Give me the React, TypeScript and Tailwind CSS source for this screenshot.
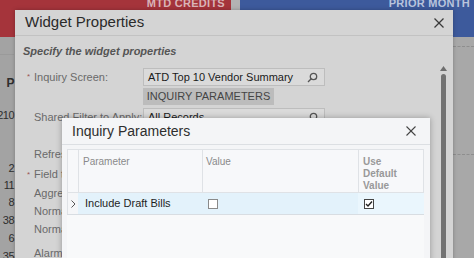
import React from "react";

const Search = () => (
  <svg width="11" height="11" viewBox="0 0 11 11" fill="none" stroke="#555" strokeWidth="1.3">
    <circle cx="6.5" cy="4.5" r="3.2" />
    <line x1="4.2" y1="6.8" x2="1" y2="10" />
  </svg>
);

const Label = ({ text, star, h, mt = 0 }: { text: string; star?: boolean; h: number; mt?: number }) => (
  <div className="flex items-center pl-[12px]" style={{ height: h, marginTop: mt }}>
    <span className="w-[7px] text-[8px] text-[#9a5555]">{star ? "*" : ""}</span>
    <span className="text-[11px] text-[#6a6a6a] whitespace-nowrap">{text}</span>
  </div>
);

export default function App() {
  return (
    <div
      className="relative w-[474px] h-[258px] overflow-hidden bg-[#a8a8a8]"
      style={{ fontFamily: '"Liberation Sans", Arial, sans-serif' }}
    >
      {/* background page */}
      <div className="flex h-[37px]">
        <div className="w-[231px] bg-[#a5343b] flex justify-end pr-[6px]">
          <span className="text-[11px] font-bold text-[#d9b5b8] leading-none mt-[-2px] tracking-wide">MTD CREDITS</span>
        </div>
        <div className="w-[9px] bg-[#b3b3b3]" />
        <div className="flex-1 bg-[#3d5a9c] flex justify-end pr-[4px]">
          <span className="text-[11px] font-bold text-[#b9c4dc] leading-none mt-[-2px] tracking-wide">PRIOR MONTH</span>
        </div>
      </div>
      <div className="flex">
        <div className="w-[15px] flex flex-col items-end pr-[1px] text-[11px] tracking-tighter text-[#2e2e2e] bg-[#a3a3a3] h-[221px]">
          <div className="h-[18px] w-full border-b border-[#9a9a9a] shrink-0" />
          <div className="h-[21px] shrink-0" />
          <div className="h-[14px] flex items-center font-bold shrink-0 text-[12px]">P</div>
          <div className="h-[18px] shrink-0" />
          <div className="h-[14px] flex items-center shrink-0">210</div>
          <div className="h-[38px] shrink-0" />
          <div className="h-[17px] flex items-center shrink-0">2</div>
          <div className="h-[17px] flex items-center shrink-0">11</div>
          <div className="h-[17px] flex items-center shrink-0">8</div>
          <div className="h-[18px] flex items-center shrink-0">38</div>
          <div className="h-[18px] flex items-center shrink-0">6</div>
          <div className="h-[18px] flex items-center shrink-0">35</div>
        </div>
        <div className="flex-1" />
        <div className="w-[21px] flex flex-col">
          <div className="h-[10px] border-b border-dashed border-[#8e8e8e]" />
          <div className="h-[108px] border-b border-dashed border-[#8e8e8e]" />
        </div>
      </div>

      {/* Widget Properties dialog */}
      <div className="absolute left-[15px] top-[10px] w-[438px] h-[260px] bg-[#d4d4d4] shadow-[0_0_4px_rgba(0,0,0,0.25)] flex flex-col">
        <div className="h-[26px] shrink-0 flex items-center justify-between pl-[10px] pr-[9px] border-b border-[#c2c2c2]">
          <span className="text-[15px] text-[#2a2a2a]">Widget Properties</span>
          <svg width="10" height="10" viewBox="0 0 10 10" stroke="#3a3a3a" strokeWidth="1.2">
            <line x1="0.5" y1="0.5" x2="9.5" y2="9.5" />
            <line x1="9.5" y1="0.5" x2="0.5" y2="9.5" />
          </svg>
        </div>
        <div className="flex">
          <div className="flex-1 flex flex-col">
            <div className="h-[28px] flex items-center pl-[8px] pt-[2px]">
              <span className="text-[11px] italic font-bold text-[#555]">Specify the widget properties</span>
            </div>
            <div className="flex mt-[4px]">
              <div className="w-[128px] flex flex-col">
                <Label text="Inquiry Screen:" star h={18} />
                <div className="h-[22px]" />
                <Label text="Shared Filter to Apply:" h={18} />
                <Label text="" h={19} />
                <Label text="Refresh Interval:" h={18} />
                <Label text="Field to Display:" star h={19} mt={2} />
                <Label text="Aggregate Function:" h={18} />
                <Label text="Normalize Value:" h={18} />
                <Label text="Normalize Format:" h={18} />
                <Label text="Alarm Limit:" h={18} mt={6} />
              </div>
              <div className="flex flex-col">
                <div className="w-[182px] h-[18px] bg-[#dadada] border border-[#bdbdbd] flex items-center justify-between pl-[4px] pr-[6px]">
                  <span className="text-[11px] text-[#1a1a1a]">ATD Top 10 Vendor Summary</span>
                  <Search />
                </div>
                <div className="w-[131px] h-[17px] mt-[2px] bg-[#bcbcbc] flex items-center justify-center">
                  <span className="text-[11px] text-[#444]">INQUIRY PARAMETERS</span>
                </div>
                <div className="w-[182px] h-[18px] mt-[3px] bg-[#dadada] border border-[#bdbdbd] flex items-center justify-between pl-[4px] pr-[6px]">
                  <span className="text-[11px] text-[#1a1a1a]">All Records</span>
                  <Search />
                </div>
              </div>
            </div>
          </div>
          <div className="w-[13px] flex flex-col items-center pt-[30px] pr-[6px]">
            <svg width="7" height="5" viewBox="0 0 7 5">
              <polygon points="3.5,0 7,5 0,5" fill="#6e6e6e" />
            </svg>
            <div className="w-[5px] h-[200px] mt-[3px] rounded-full bg-[#727272]" />
          </div>
        </div>
      </div>

      {/* Inquiry Parameters dialog */}
      <div className="absolute left-[62px] top-[118px] w-[368px] h-[150px] bg-[#f4f5f7] shadow-[0_0_6px_rgba(0,0,0,0.3)] flex flex-col">
        <div className="h-[27px] shrink-0 flex items-center justify-between pl-[10px] pr-[14px] border-b border-[#dcdfe3]">
          <span className="text-[14px] text-[#2e2e2e]">Inquiry Parameters</span>
          <svg width="10" height="10" viewBox="0 0 10 10" stroke="#444" strokeWidth="1.1">
            <line x1="0.5" y1="0.5" x2="9.5" y2="9.5" />
            <line x1="9.5" y1="0.5" x2="0.5" y2="9.5" />
          </svg>
        </div>
        <div className="mx-[5px] mt-[4px] w-[357px] bg-[#f8f9fa] flex flex-col flex-1">
          <div className="flex h-[44px] border border-[#dfe2e6] bg-[#f7f8fa] text-[10px] text-[#8a8a8a] leading-[12px]">
            <div className="w-[11px] border-r border-[#dfe2e6]" />
            <div className="w-[124px] border-r border-[#dfe2e6] pl-[4px] pt-[6px]">Parameter</div>
            <div className="w-[156px] border-r border-[#dfe2e6] pl-[3px] pt-[6px]">Value</div>
            <div className="flex-1 pl-[4px] pt-[6px] font-bold text-[#999]">
              Use<br />Default<br />Value
            </div>
          </div>
          <div className="flex h-[22px] border-b border-[#d8dde2]">
            <div className="w-[11px] bg-[#f5f6f8] flex items-center justify-center border-l border-[#dfe2e6]">
              <svg width="5" height="8" viewBox="0 0 5 8" fill="none" stroke="#555" strokeWidth="1">
                <polyline points="0.5,0.5 4,4 0.5,7.5" />
              </svg>
            </div>
            <div className="w-[124px] bg-[#e3f2fb] flex items-center pl-[7px]">
              <span className="text-[11px] text-[#1e1e1e]">Include Draft Bills</span>
            </div>
            <div className="w-[156px] bg-[#e3f2fb] flex items-center pl-[6px]">
              <div className="w-[10px] h-[10px] border border-[#8a8a8a] bg-white" />
            </div>
            <div className="flex-1 bg-[#eaf6fd] flex items-center pl-[6px]">
              <div className="w-[10px] h-[10px] border border-[#444] bg-white flex items-center justify-center">
                <svg width="8" height="8" viewBox="0 0 8 8" fill="none" stroke="#222" strokeWidth="1.4">
                  <polyline points="1,4 3,6 7,1.5" />
                </svg>
              </div>
            </div>
          </div>
          <div className="flex-1" />
        </div>
      </div>
    </div>
  );
}
